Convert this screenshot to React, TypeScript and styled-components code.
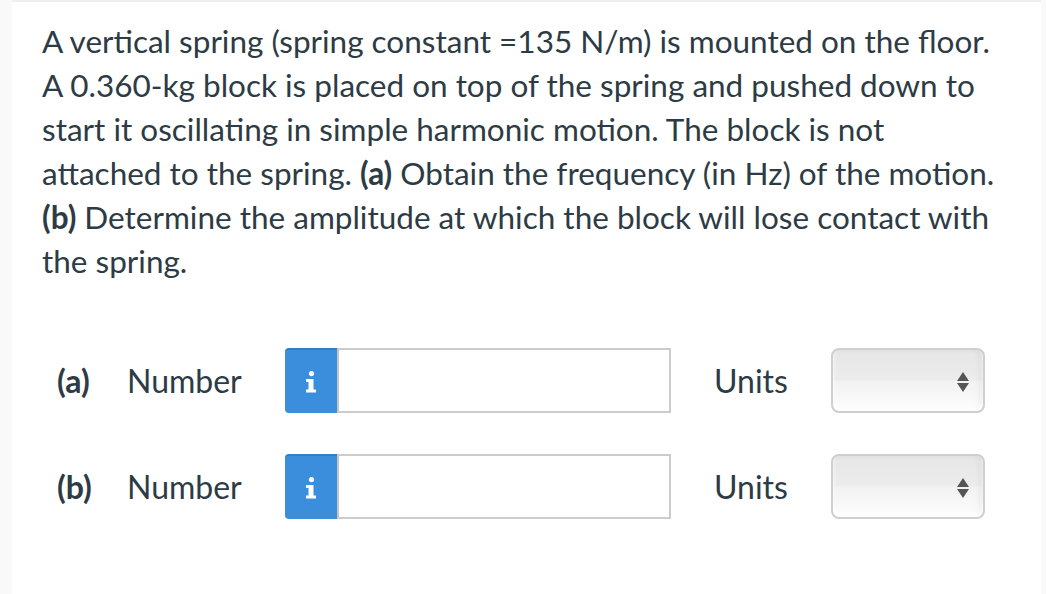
import * as React from 'react';
import styled, {createGlobalStyle} from 'styled-components';

const GlobalStyle = createGlobalStyle`
    html, body {
        margin: 0;
        padding: 0;
        background: #fff;
    }
    body {
        font-family: Lato, "Liberation Sans", sans-serif;
        color: #2d3b45;
    }
`;

const Page = styled.div`
    display: flex;
    width: 1046px;
    height: 594px;
    overflow: hidden;
    background: #f9f9f9;
`;

const Card = styled.div`
    flex: 0 0 1029px;
    margin-left: 12px;
    background: #fff;
    border-top: 2px solid #eeeeee;
    padding: 17px 0 0 30px;
    box-sizing: border-box;
`;

const Question = styled.p`
    margin: 0;
    font-size: 31.5px;
    line-height: 44px;
    white-space: nowrap;
    & > b {
        font-weight: 700;
    }
`;

const Answers = styled.div`
    display: flex;
    flex-direction: column;
    gap: 41px;
    margin-top: 65px;
`;

const Row = styled.div`
    display: flex;
    align-items: center;
    height: 65px;
    font-size: 32px;
`;

const Part = styled.span`
    font-weight: 700;
    width: 70px;
    padding-left: 15px;
`;

const Label = styled.span`
    width: 158px;
`;

const InfoButton = styled.button`
    display: flex;
    align-items: center;
    justify-content: center;
    width: 52px;
    height: 65px;
    border: none;
    border-top: 2px solid #2f7fc8;
    border-radius: 4px 0 0 4px;
    background: #3a8edb;
    padding: 0;
    box-sizing: border-box;
`;

const NumberInput = styled.input`
    width: 334px;
    height: 65px;
    box-sizing: border-box;
    border: 2px solid #cccccc;
    border-left: 2px solid #c4c4c4;
    background: #fff;
    outline: none;
    margin-right: 43px;
`;

const UnitsLabel = styled.span`
    width: 117px;
`;

const Select = styled.div`
    position: relative;
    width: 154px;
    height: 65px;
    box-sizing: border-box;
    border: 2px solid #cfcfcf;
    border-radius: 8px;
    background: linear-gradient(to bottom, #e6e6e6 0%, #ececec 48%, #f2f2f2 52%, #fdfdfd 100%);
    box-shadow: inset 0 -3px 4px rgba(255, 255, 255, 0.95), inset -4px 0 5px rgba(0, 0, 0, 0.05);
`;

const Arrows = styled.svg`
    position: absolute;
    right: 13px;
    top: 50%;
    transform: translateY(-45%);
`;

const InfoIcon = () => (
    <svg width="12" height="22" viewBox="0 0 12 22">
        <circle cx="6.5" cy="2.6" r="2.6" fill="#fff" />
        <path d="M1 8 H8.5 V18.5 H11 V21.5 H1 V18.5 H3.5 V11 H1 Z" fill="#fff" />
    </svg>
);

type AnswerProps = {part: string};

const AnswerRow: React.FC<AnswerProps> = ({part}) => (
    <Row>
        <Part>({part})</Part>
        <Label>Number</Label>
        <InfoButton><InfoIcon /></InfoButton>
        <NumberInput type="text" />
        <UnitsLabel>Units</UnitsLabel>
        <Select>
            <Arrows width="14" height="22" viewBox="0 0 14 22">
                <polygon points="7,1 13,10 1,10" fill="#555" />
                <polygon points="1,12 13,12 7,21" fill="#555" />
            </Arrows>
        </Select>
    </Row>
);

const App: React.FC = () => {
    return <>
        <GlobalStyle />
        <Page>
            <Card>
                <Question>
                    A vertical spring (spring constant =135 N/m) is mounted on the floor.<br />
                    A 0.360-kg block is placed on top of the spring and pushed down to<br />
                    start it oscillating in simple harmonic motion. The block is not<br />
                    attached to the spring. <b>(a)</b> Obtain the frequency (in Hz) of the motion.<br />
                    <b>(b)</b> Determine the amplitude at which the block will lose contact with<br />
                    the spring.
                </Question>
                <Answers>
                    <AnswerRow part="a" />
                    <AnswerRow part="b" />
                </Answers>
            </Card>
        </Page>
    </>
}

export default App;
